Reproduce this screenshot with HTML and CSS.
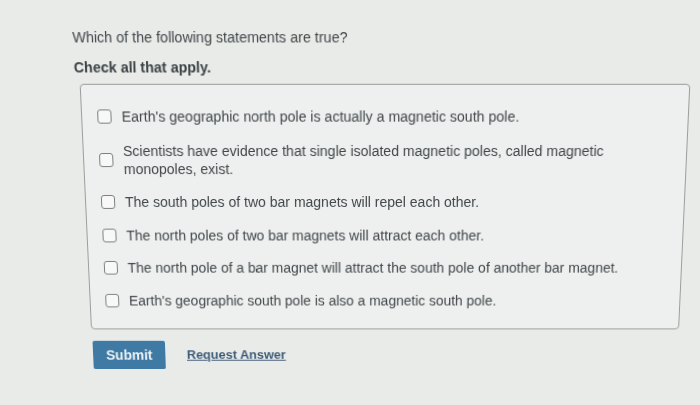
FILE: index.html
```html
<!DOCTYPE html>
<html lang="en">
<head>
    <meta charset="UTF-8">
    <meta name="viewport" content="width=device-width, initial-scale=1.0">
    <title>Magnetism Quiz</title>
    <link rel="stylesheet" href="styles.css">
</head>
<body>
    <div class="page">
        <p class="question">Which of the following statements are true?</p>
        <p class="instruction">Check all that apply.</p>
        <div class="choices">
            <label class="choice"><span class="box"></span><span class="text">Earth's geographic north pole is actually a magnetic south pole.</span></label>
            <label class="choice"><span class="box"></span><span class="text">Scientists have evidence that single isolated magnetic poles, called magnetic monopoles, exist.</span></label>
            <label class="choice"><span class="box"></span><span class="text">The south poles of two bar magnets will repel each other.</span></label>
            <label class="choice"><span class="box"></span><span class="text">The north poles of two bar magnets will attract each other.</span></label>
            <label class="choice"><span class="box"></span><span class="text">The north pole of a bar magnet will attract the south pole of another bar magnet.</span></label>
            <label class="choice"><span class="box"></span><span class="text">Earth's geographic south pole is also a magnetic south pole.</span></label>
        </div>
        <div class="actions">
            <button type="button" class="submit">Submit</button>
            <a href="#" class="request">Request Answer</a>
        </div>
    </div>
</body>
</html>
```

FILE: styles.css
```css
* { margin: 0; padding: 0; box-sizing: border-box; }
body { font-family: 'Liberation Sans', Arial, sans-serif; background: #e8ebe8; color: #42474b; height: 100vh; overflow: hidden; }
.page { width: 700px; padding: 30px 0 0 80px; transform-origin: 386px 200px; transform: perspective(800px) rotateX(-7deg); }
.question { font-size: 14px; line-height: 20px; margin-bottom: 9px; }
.instruction { font-size: 14px; line-height: 20px; font-weight: bold; margin-bottom: 6px; color: #3c4145; }
.choices { margin-left: 5px; width: 600px; border: 1px solid #9b9e9c; border-radius: 4px; background: #edf0ee; padding: 22px 0 20px 15px; display: flex; flex-direction: column; gap: 15.5px; }
.choice { display: flex; align-items: center; gap: 10px; font-size: 14px; line-height: 18px; }
.box { flex: none; width: 14px; height: 14px; border: 1.5px solid #7d8083; border-radius: 3px; background: #f7f8f7; }
.text { max-width: 500px; }
.actions { display: flex; align-items: center; gap: 22px; margin: 12px 0 0 6px; }
.submit { width: 74px; height: 30px; border: none; border-radius: 2px; background: #3f7aa4; color: #eef3f6; font-family: inherit; font-size: 14px; font-weight: bold; }
.request { color: #3e5a78; font-size: 13px; font-weight: bold; text-decoration: underline; }
```
